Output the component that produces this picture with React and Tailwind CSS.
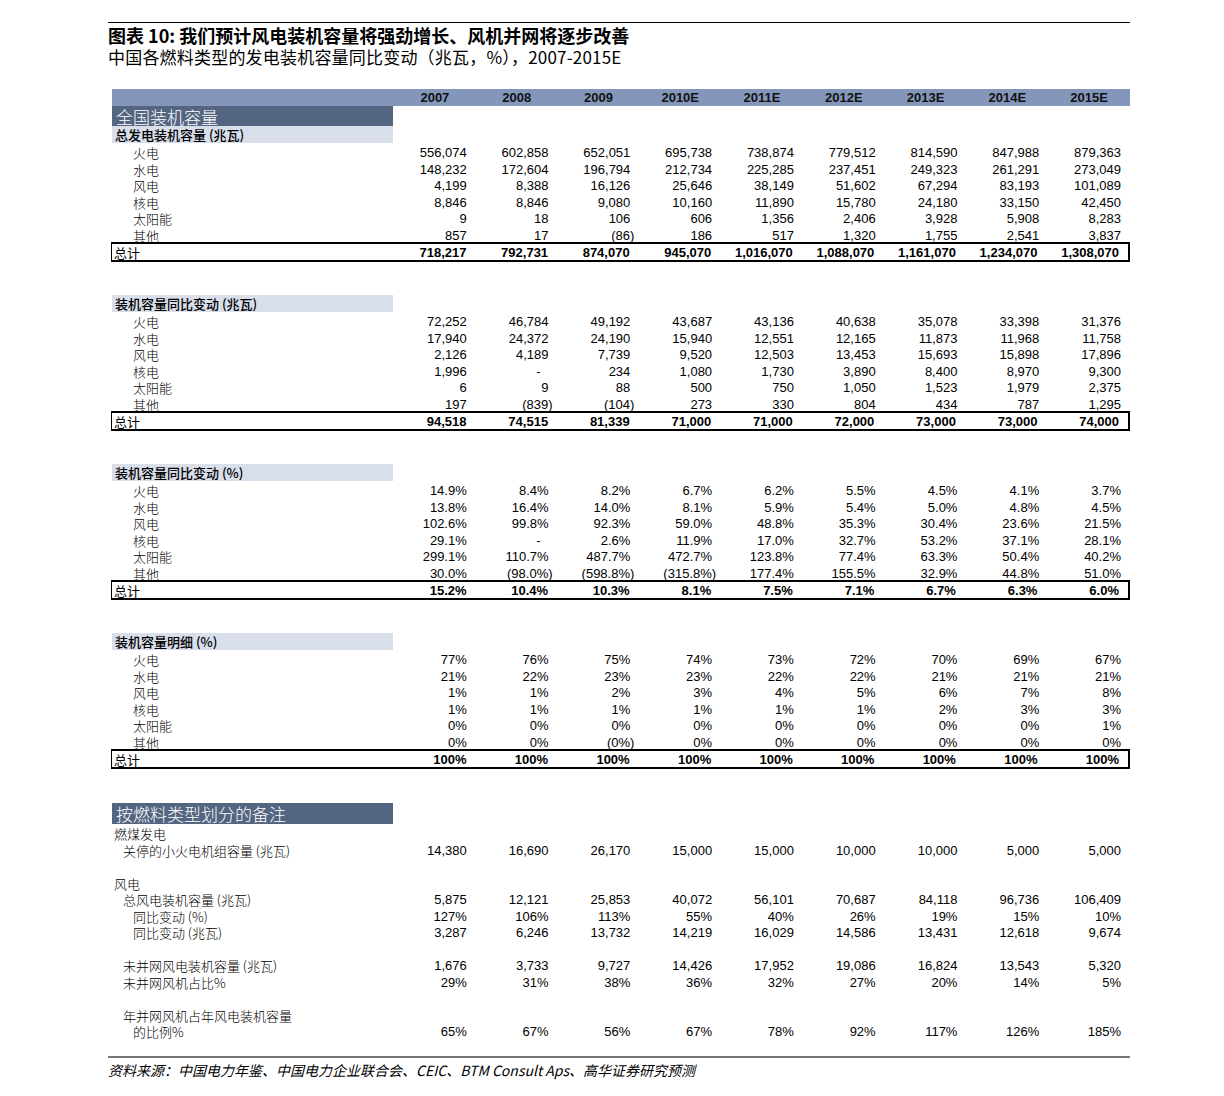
import React from 'react';

const years = ['2007', '2008', '2009', '2010E', '2011E', '2012E', '2013E', '2014E', '2015E'];

const cn = { fontFamily: '"Noto Sans CJK SC", "Liberation Sans", sans-serif' };
const num = { fontFamily: '"Liberation Sans", Arial, "Noto Sans CJK SC", sans-serif' };

const labels = ['火电', '水电', '风电', '核电', '太阳能', '其他'];

const sections = [
    {
        title: '全国装机容量',
        sub: '总发电装机容量 (兆瓦)',
        rows: [
            ['556,074', '602,858', '652,051', '695,738', '738,874', '779,512', '814,590', '847,988', '879,363'],
            ['148,232', '172,604', '196,794', '212,734', '225,285', '237,451', '249,323', '261,291', '273,049'],
            ['4,199', '8,388', '16,126', '25,646', '38,149', '51,602', '67,294', '83,193', '101,089'],
            ['8,846', '8,846', '9,080', '10,160', '11,890', '15,780', '24,180', '33,150', '42,450'],
            ['9', '18', '106', '606', '1,356', '2,406', '3,928', '5,908', '8,283'],
            ['857', '17', '(86)', '186', '517', '1,320', '1,755', '2,541', '3,837'],
        ],
        total: ['718,217', '792,731', '874,070', '945,070', '1,016,070', '1,088,070', '1,161,070', '1,234,070', '1,308,070'],
    },
    {
        sub: '装机容量同比变动 (兆瓦)',
        rows: [
            ['72,252', '46,784', '49,192', '43,687', '43,136', '40,638', '35,078', '33,398', '31,376'],
            ['17,940', '24,372', '24,190', '15,940', '12,551', '12,165', '11,873', '11,968', '11,758'],
            ['2,126', '4,189', '7,739', '9,520', '12,503', '13,453', '15,693', '15,898', '17,896'],
            ['1,996', '-', '234', '1,080', '1,730', '3,890', '8,400', '8,970', '9,300'],
            ['6', '9', '88', '500', '750', '1,050', '1,523', '1,979', '2,375'],
            ['197', '(839)', '(104)', '273', '330', '804', '434', '787', '1,295'],
        ],
        total: ['94,518', '74,515', '81,339', '71,000', '71,000', '72,000', '73,000', '73,000', '74,000'],
    },
    {
        sub: '装机容量同比变动 (%)',
        rows: [
            ['14.9%', '8.4%', '8.2%', '6.7%', '6.2%', '5.5%', '4.5%', '4.1%', '3.7%'],
            ['13.8%', '16.4%', '14.0%', '8.1%', '5.9%', '5.4%', '5.0%', '4.8%', '4.5%'],
            ['102.6%', '99.8%', '92.3%', '59.0%', '48.8%', '35.3%', '30.4%', '23.6%', '21.5%'],
            ['29.1%', '-', '2.6%', '11.9%', '17.0%', '32.7%', '53.2%', '37.1%', '28.1%'],
            ['299.1%', '110.7%', '487.7%', '472.7%', '123.8%', '77.4%', '63.3%', '50.4%', '40.2%'],
            ['30.0%', '(98.0%)', '(598.8%)', '(315.8%)', '177.4%', '155.5%', '32.9%', '44.8%', '51.0%'],
        ],
        total: ['15.2%', '10.4%', '10.3%', '8.1%', '7.5%', '7.1%', '6.7%', '6.3%', '6.0%'],
    },
    {
        sub: '装机容量明细 (%)',
        rows: [
            ['77%', '76%', '75%', '74%', '73%', '72%', '70%', '69%', '67%'],
            ['21%', '22%', '23%', '23%', '22%', '22%', '21%', '21%', '21%'],
            ['1%', '1%', '2%', '3%', '4%', '5%', '6%', '7%', '8%'],
            ['1%', '1%', '1%', '1%', '1%', '1%', '2%', '3%', '3%'],
            ['0%', '0%', '0%', '0%', '0%', '0%', '0%', '0%', '1%'],
            ['0%', '0%', '(0%)', '0%', '0%', '0%', '0%', '0%', '0%'],
        ],
        total: ['100%', '100%', '100%', '100%', '100%', '100%', '100%', '100%', '100%'],
    },
];

const notes = [
    { label: '燃煤发电', indent: 'pl-[2px]' },
    { label: '关停的小火电机组容量 (兆瓦)', indent: 'pl-[11px]', values: ['14,380', '16,690', '26,170', '15,000', '15,000', '10,000', '10,000', '5,000', '5,000'] },
    { blank: true },
    { label: '风电', indent: 'pl-[2px]' },
    { label: '总风电装机容量 (兆瓦)', indent: 'pl-[11px]', values: ['5,875', '12,121', '25,853', '40,072', '56,101', '70,687', '84,118', '96,736', '106,409'] },
    { label: '同比变动 (%)', indent: 'pl-[21px]', values: ['127%', '106%', '113%', '55%', '40%', '26%', '19%', '15%', '10%'] },
    { label: '同比变动 (兆瓦)', indent: 'pl-[21px]', values: ['3,287', '6,246', '13,732', '14,219', '16,029', '14,586', '13,431', '12,618', '9,674'] },
    { blank: true },
    { label: '未并网风电装机容量 (兆瓦)', indent: 'pl-[11px]', values: ['1,676', '3,733', '9,727', '14,426', '17,952', '19,086', '16,824', '13,543', '5,320'] },
    { label: '未并网风机占比%', indent: 'pl-[11px]', values: ['29%', '31%', '38%', '36%', '32%', '27%', '20%', '14%', '5%'] },
    { blank: true },
    { label: '年并网风机占年风电装机容量', indent: 'pl-[11px]' },
    { label: '的比例%', indent: 'pl-[21px]', values: ['65%', '67%', '56%', '67%', '78%', '92%', '117%', '126%', '185%'] },
];

function Cell({ v, bold }) {
    // 会计格式：负数括号向右突出，短横线居中
    let pad = 'pr-[9px]';
    if (v.endsWith(')')) pad = 'pr-[5px]';
    if (v === '-') pad = 'pr-[17px]';
    return (
        <div className={`text-right text-[13px] leading-[15px] ${pad} ${bold ? 'font-bold' : ''}`} style={num}>
            {v}
        </div>
    );
}

function Row({ label, values, indent = 'pl-[21px]' }) {
    return (
        <div className="grid grid-cols-[282px_repeat(9,1fr)] h-[16.5px] items-center pt-[2px]">
            <div className={`text-[13px] leading-[15px] font-light ${indent}`} style={cn}>{label}</div>
            {values ? values.map((v, i) => <Cell key={i} v={v} />) : null}
        </div>
    );
}

function Section({ s, first }) {
    return (
        <div className={first ? '' : 'mt-[33px]'}>
            {s.title && (
                <div className="w-[281px] h-[20px] bg-[#536580] text-white text-[17px] leading-none font-light flex items-center pl-[4px]" style={cn}>
                    {s.title}
                </div>
            )}
            <div className="w-[281px] h-[17px] bg-[#d8deea] text-[13px] leading-none flex items-center pl-[3px] font-medium" style={cn}>
                {s.sub}
            </div>
            {s.rows.map((r, i) => (
                <Row key={i} label={labels[i]} values={r} />
            ))}
            <div className="grid grid-cols-[282px_repeat(9,1fr)] h-[20px] items-center border-t-2 border-l border-r-2 border-b-2 border-black -ml-px">
                <div className="text-[13px] leading-[15px] pl-[2px]" style={cn}>总计</div>
                {s.total.map((v, i) => <Cell key={i} v={v} bold />)}
            </div>
        </div>
    );
}

export default function App() {
    return (
        <div className="bg-white w-[1224px] h-[1096px] pt-[22px] pl-[108px]">
            <div className="w-[1022px]">
                <div className="border-t border-black" />
                <div className="text-[18px] leading-[22px] font-bold text-black mt-[1px]" style={cn}>
                    图表 10: 我们预计风电装机容量将强劲增长、风机并网将逐步改善
                </div>
                <div className="text-[17px] leading-[22px] tracking-[0.2px] text-black" style={cn}>
                    中国各燃料类型的发电装机容量同比变动（兆瓦，%），2007-2015E
                </div>

                <div className="ml-[4px] w-[1018px] mt-[21px]">
                    <div className="grid grid-cols-[282px_repeat(9,1fr)] h-[17px] items-center bg-[#8497bb]">
                        <div />
                        {years.map((y) => (
                            <div key={y} className="text-center text-[13px] leading-[15px] font-bold text-[#111]" style={num}>{y}</div>
                        ))}
                    </div>

                    {sections.map((s, i) => (
                        <Section key={i} s={s} first={i === 0} />
                    ))}

                    <div className="mt-[34px] w-[281px] h-[21px] bg-[#536580] text-white text-[17px] leading-none font-light flex items-center pl-[4px]" style={cn}>
                        按燃料类型划分的备注
                    </div>
                    {notes.map((n, i) =>
                        n.blank ? (
                            <div key={i} className="h-[16.5px]" />
                        ) : (
                            <Row key={i} label={n.label} values={n.values} indent={n.indent} />
                        )
                    )}
                </div>

                <div className="mt-[17px] border-t-2 border-[#777]" />
                <div className="mt-[3px] text-[14px] leading-[18px] italic text-black" style={cn}>
                    资料来源：中国电力年鉴、中国电力企业联合会、CEIC、BTM Consult Aps、高华证券研究预测
                </div>
            </div>
        </div>
    );
}
